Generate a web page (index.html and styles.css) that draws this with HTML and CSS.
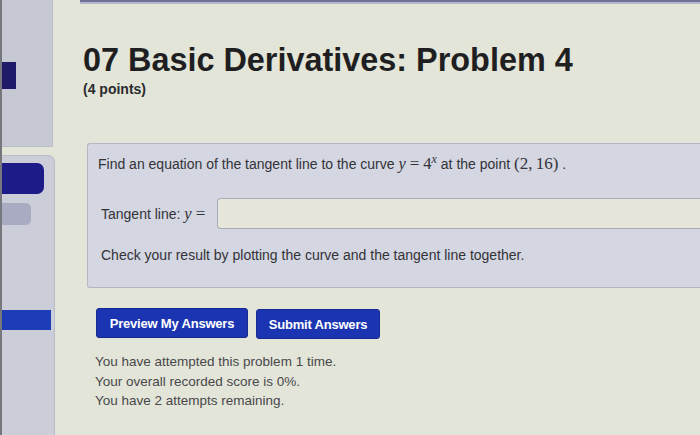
FILE: index.html
```html
<!DOCTYPE html>
<html>
<head>
<meta charset="utf-8">
<link rel="stylesheet" href="styles.css">
</head>
<body>
<div class="page">
  <aside class="sidebar">
    <div class="side-top">
      <div class="side-mark"></div>
    </div>
    <div class="side-bottom">
      <div class="side-btn side-btn-dark"></div>
      <div class="side-btn side-btn-light"></div>
      <div class="side-bar"></div>
    </div>
  </aside>
  <main class="main">
    <div class="topline"></div>
    <div class="content">
      <h1 class="title">07 Basic Derivatives: Problem 4</h1>
      <div class="points">(4 points)</div>
      <section class="problem">
        <p class="row row-first">Find an equation of the tangent line to the curve <span class="math"><i>y</i><span class="eq">=</span>4<sup><i>x</i></sup></span> at the point <span class="math big">(2,&thinsp;16)</span> .</p>
        <div class="answer">
          <span class="label">Tangent line: <span class="math"><i>y</i><span class="eq">=</span></span></span>
          <div class="input"></div>
        </div>
        <p class="row row-last">Check your result by plotting the curve and the tangent line together.</p>
      </section>
      <div class="buttons">
        <button class="btn btn-preview">Preview My Answers</button>
        <button class="btn btn-submit">Submit Answers</button>
      </div>
      <div class="messages">
        <div>You have attempted this problem 1 time.</div>
        <div>Your overall recorded score is 0%.</div>
        <div>You have 2 attempts remaining.</div>
      </div>
    </div>
  </main>
</div>
</body>
</html>
```
FILE: styles.css
```css
html, body {
  margin: 0;
  padding: 0;
  width: 700px;
  height: 435px;
  overflow: hidden;
  background: #e3e5d8;
  font-family: "Liberation Sans", Arial, sans-serif;
}

.page {
  display: flex;
  height: 435px;
  border-left: 2px solid #77787e;
  box-sizing: border-box;
}

.sidebar {
  width: 51px;
  flex: none;
  display: flex;
  flex-direction: column;
  gap: 8px;
}

.side-top {
  height: 147px;
  background: #c6c8d4;
  border-right: 1px solid #b9bbc8;
  border-bottom: 1px solid #b9bbc8;
  border-bottom-right-radius: 2px;
  box-sizing: border-box;
  padding-top: 62px;
}

.side-mark {
  width: 14px;
  height: 27px;
  background: #1f1b69;
}

.side-bottom {
  flex: 1;
  background: #cbced8;
  border-top: 1px solid #b9bbc8;
  border-right: 1px solid #b9bbc8;
  border-top-right-radius: 7px;
  width: 53px;
  padding-top: 7px;
  box-sizing: border-box;
  display: flex;
  flex-direction: column;
}

.side-btn {
  border-radius: 0 7px 7px 0;
}

.side-btn-dark {
  width: 42px;
  height: 31px;
  background: #1c1b88;
}

.side-btn-light {
  margin-top: 9px;
  width: 29px;
  height: 22px;
  background: #a9abc2;
  border-radius: 0 5px 5px 0;
}

.side-bar {
  margin-top: 85px;
  width: 49px;
  height: 20px;
  background: #1f3cb8;
}

.main {
  flex: 1;
  min-width: 0;
  display: flex;
  flex-direction: column;
}

.topline {
  margin-left: 27px;
  height: 2px;
  background: #6f7193;
  border-bottom: 2px solid #b6b8cf;
}

.content {
  padding: 37px 0 0 30px;
}

.title {
  margin: 0;
  font-size: 32.4px;
  line-height: 38px;
  font-weight: bold;
  color: #1f1f22;
  letter-spacing: 0;
}

.points {
  margin-top: 2px;
  font-size: 14px;
  line-height: 17px;
  font-weight: bold;
  color: #2a2a2e;
}

.problem {
  margin: 45px 0 0 4px;
  background: #d4d6e1;
  border: 1px solid #b4b6c4;
  border-right: none;
  border-radius: 3px 0 0 3px;
  padding: 11px 0 23px 10px;
  color: #333338;
  font-size: 14px;
}

.row {
  margin: 0;
  line-height: 17px;
  height: 17px;
  white-space: nowrap;
}

.row-last {
  margin-top: 18px;
  padding-left: 3px;
}

.math {
  font-family: "Liberation Serif", "Times New Roman", serif;
  font-size: 16.5px;
}

.math i {
  font-style: italic;
}

.math sup {
  font-size: 12px;
  line-height: 0;
  vertical-align: 6px;
}

.math .eq {
  padding: 0 4px;
  font-size: 17px;
}

.math.big {
  font-size: 17px;
}

.answer {
  margin-top: 26px;
  display: flex;
  align-items: center;
  gap: 8px;
  padding-left: 3px;
}

.label {
  white-space: nowrap;
}

.input {
  flex: 1;
  height: 29px;
  background: #e6e7da;
  border: 1px solid #a9abb6;
  border-right: none;
  border-radius: 4px 0 0 4px;
}

.buttons {
  margin: 20px 0 0 13px;
  display: flex;
  gap: 8px;
  align-items: flex-start;
}

.btn {
  font-family: "Liberation Sans", Arial, sans-serif;
  font-weight: bold;
  font-size: 13px;
  letter-spacing: -0.2px;
  white-space: nowrap;
  color: #ffffff;
  background: #1b35b2;
  border: 1px solid #15298e;
  border-radius: 3px;
  height: 30px;
  padding: 0;
  margin: 0;
}

.btn-preview {
  width: 152px;
}

.btn-submit {
  margin-top: 1px;
  width: 124px;
}

.messages {
  margin: 13px 0 0 12px;
  font-size: 13.5px;
  line-height: 19.5px;
  color: #48484c;
}
```
